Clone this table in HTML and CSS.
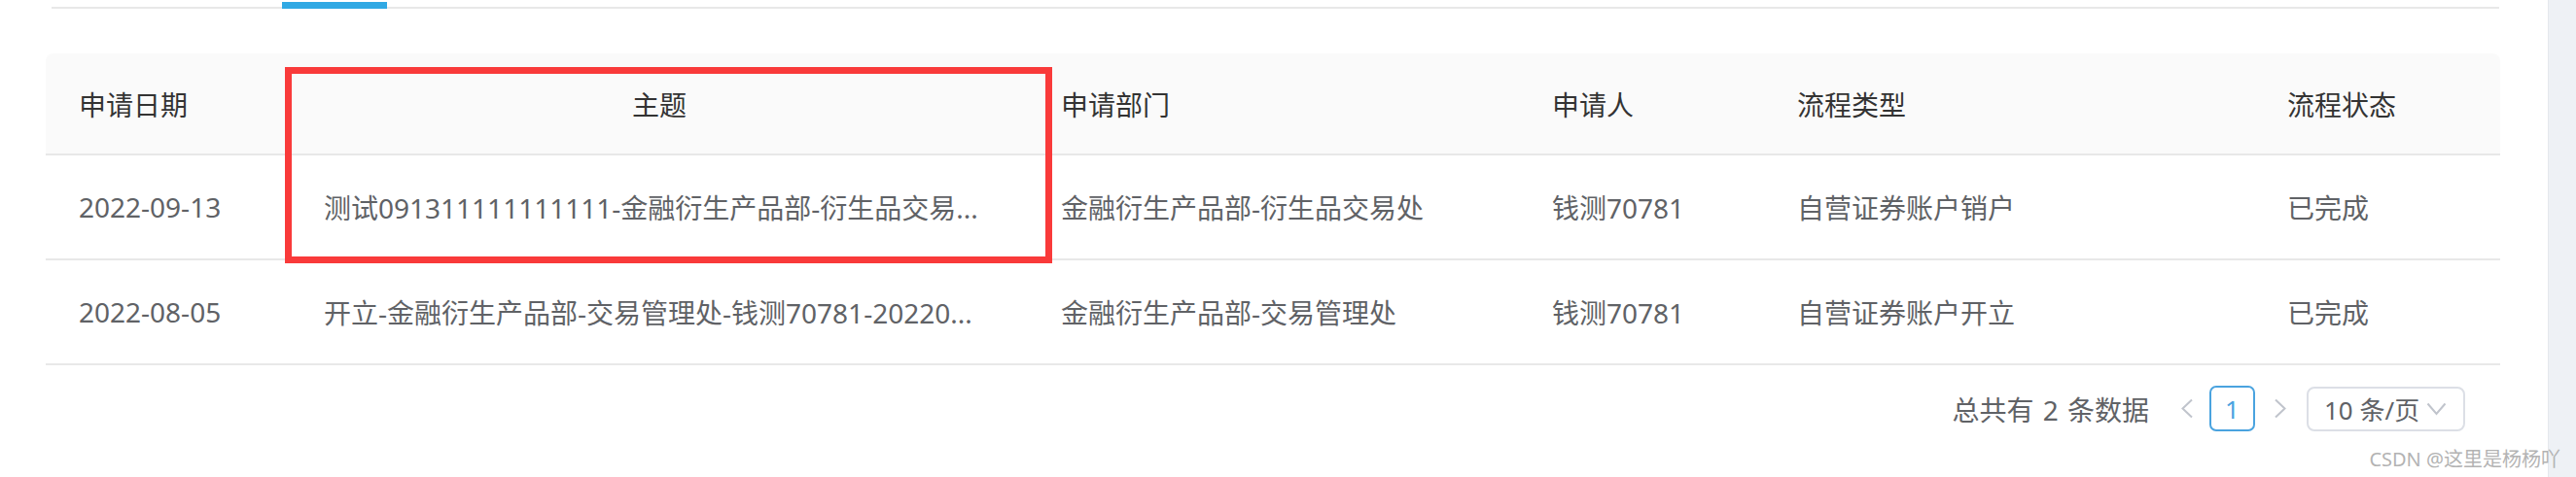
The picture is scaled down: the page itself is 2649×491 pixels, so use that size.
FILE: index.html
```html
<!DOCTYPE html>
<html lang="zh-CN">
<head>
<meta charset="utf-8">
<title>流程列表</title>
<link rel="stylesheet" href="styles.css">
</head>
<body>
<div class="page">
  <main class="main">
    <div class="tabs">
      <span class="tab-line tab-line-start"></span>
      <span class="tab-active"></span>
      <span class="tab-line tab-line-end"></span>
    </div>

    <div class="table-wrap">
      <div class="table">
        <div class="cell th th-first">申请日期</div>
        <div class="cell th center">主题</div>
        <div class="cell th">申请部门</div>
        <div class="cell th">申请人</div>
        <div class="cell th">流程类型</div>
        <div class="cell th th-last">流程状态</div>

        <div class="cell">2022-09-13</div>
        <div class="cell"><span class="ellipsis">测试091311111111111-金融衍生产品部-衍生品交易...</span></div>
        <div class="cell">金融衍生产品部-衍生品交易处</div>
        <div class="cell">钱测70781</div>
        <div class="cell">自营证券账户销户</div>
        <div class="cell">已完成</div>

        <div class="cell">2022-08-05</div>
        <div class="cell"><span class="ellipsis">开立-金融衍生产品部-交易管理处-钱测70781-20220...</span></div>
        <div class="cell">金融衍生产品部-交易管理处</div>
        <div class="cell">钱测70781</div>
        <div class="cell">自营证券账户开立</div>
        <div class="cell">已完成</div>
      </div>
      <div class="highlight"></div>
    </div>

    <div class="pagination">
      <span class="total">总共有 2 条数据</span>
      <span class="pager-btn pager-prev">
        <svg width="14" height="21" viewBox="0 0 14 21"><polyline points="12,1.5 2.5,10.5 12,19.5" fill="none" stroke="#c0c4cc" stroke-width="2"/></svg>
      </span>
      <span class="pager-btn pager-page">1</span>
      <span class="pager-btn pager-next">
        <svg width="14" height="21" viewBox="0 0 14 21"><polyline points="2,1.5 11.5,10.5 2,19.5" fill="none" stroke="#c0c4cc" stroke-width="2"/></svg>
      </span>
      <span class="size-select">
        <span class="size-text">10 条/页</span>
        <svg width="21" height="14" viewBox="0 0 21 14"><polyline points="1.5,1.5 10.5,12 19.5,1.5" fill="none" stroke="#c0c4cc" stroke-width="2"/></svg>
      </span>
    </div>
  </main>
  <aside class="side"></aside>
  <div class="watermark">CSDN @这里是杨杨吖</div>
</div>
</body>
</html>
```

FILE: styles.css
```css
html, body {
  margin: 0;
  padding: 0;
  background: #ffffff;
}

body {
  font-family: "Noto Sans", "Noto Sans CJK SC", sans-serif;
}

.page {
  position: relative;
  display: flex;
  height: 491px;
  overflow: hidden;
}

.main {
  flex: 1;
  min-width: 0;
}

.side {
  width: 28px;
  background: #eef1f5;
  border-left: 1px solid #e5e8ed;
}

/* tab bar remnant */
.tabs {
  display: flex;
  align-items: flex-end;
  height: 7px;
  margin: 2px 50px 0 53px;
}

.tab-line {
  display: block;
  height: 2px;
  background: #e8e8e8;
}

.tab-line-start {
  width: 237px;
}

.tab-line-end {
  flex: 1;
}

.tab-active {
  display: block;
  width: 108px;
  height: 7px;
  background: #30a9e4;
}

/* table */
.table-wrap {
  position: relative;
  width: 2524px;
  margin: 46px 0 0 47px;
}

.table {
  display: grid;
  grid-template-columns: 252px 758px 505px 252px 504px 253px;
}

.cell {
  box-sizing: border-box;
  display: flex;
  align-items: center;
  height: 108px;
  padding: 0 34px;
  border-bottom: 2px solid #e8e8e8;
  font-size: 28px;
  color: #606266;
  white-space: nowrap;
  overflow: hidden;
}

.ellipsis {
  overflow: hidden;
  text-overflow: ellipsis;
}

.th {
  height: 105px;
  background: #fafafa;
  color: #333333;
}

.th-first {
  border-top-left-radius: 8px;
}

.th-last {
  border-top-right-radius: 8px;
}

.center {
  justify-content: center;
}

.highlight {
  position: absolute;
  left: 246px;
  top: 14px;
  width: 789px;
  height: 202px;
  box-sizing: border-box;
  border: 7px solid #f93a3a;
  pointer-events: none;
}

/* pagination */
.pagination {
  display: flex;
  justify-content: flex-end;
  align-items: center;
  height: 47px;
  margin: 21px 85px 0 0;
}

.total {
  font-size: 28px;
  color: #606266;
  margin-right: 15px;
  word-spacing: 2px;
}

.pager-btn {
  box-sizing: border-box;
  display: flex;
  align-items: center;
  justify-content: center;
  width: 47px;
  height: 47px;
}

.pager-page {
  border: 2px solid #4aa3df;
  border-radius: 7px;
  color: #4aa3df;
  font-size: 26px;
}

.pager-next {
  margin-left: 2px;
}

.size-select {
  box-sizing: border-box;
  display: flex;
  align-items: center;
  justify-content: space-between;
  width: 163px;
  height: 46px;
  margin-left: 4px;
  padding: 0 17px 0 16px;
  border: 2px solid #dcdfe6;
  border-radius: 8px;
  font-size: 26px;
  color: #606266;
}

.watermark {
  position: absolute;
  right: 16px;
  top: 457px;
  font-family: "Noto Sans", "Noto Sans CJK SC", sans-serif;
  font-size: 20px;
  color: #b3b3b3;
  white-space: nowrap;
}
```
